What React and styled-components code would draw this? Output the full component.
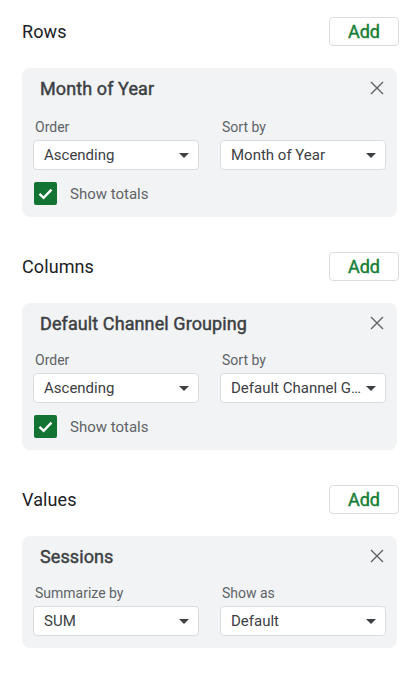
import React from 'react';
import styled, { createGlobalStyle } from 'styled-components';

const GlobalStyle = createGlobalStyle`
    body {
        margin: 0;
        background: #ffffff;
        font-family: Roboto, 'Noto Sans', Arial, sans-serif;
    }
`;

const Panel = styled.div`
    padding: 17px 18px 20px 22px;
    display: flex;
    flex-direction: column;
    gap: 35px;
`;

const Section = styled.section`
    display: flex;
    flex-direction: column;
    gap: 22px;
`;

const SectionHeader = styled.div`
    display: flex;
    align-items: center;
    justify-content: space-between;

    h2 {
        margin: 0;
        font-size: 18px;
        font-weight: 400;
        color: #202124;
        letter-spacing: 0.1px;
    }
`;

// medium weight: regular face with a thin stroke, since Roboto 500 renders as bold here
const AddButton = styled.button`
    width: 70px;
    height: 29px;
    background: #fff;
    border: 1px solid #dadce0;
    border-radius: 4px;
    color: #188038;
    font-family: inherit;
    font-size: 18px;
    font-weight: 400;
    -webkit-text-stroke: 0.45px #188038;
    padding: 0;
    cursor: pointer;
`;

const Card = styled.div`
    width: 375px;
    box-sizing: border-box;
    background: #f1f3f4;
    border-radius: 8px;
    padding: 10px 11px 12px 11px;
`;

const CardTitle = styled.div`
    display: flex;
    align-items: center;
    justify-content: space-between;
    height: 20px;
    padding-left: 7px;
    margin-bottom: ${p => p.gap}px;

    span {
        font-size: 18px;
        font-weight: 400;
        color: #3c4043;
        -webkit-text-stroke: 0.45px #3c4043;
        letter-spacing: 0.1px;
    }
`;

const CloseButton = styled.button`
    background: none;
    border: none;
    padding: 0;
    width: 14px;
    height: 14px;
    margin-right: 2px;
    display: flex;
    cursor: pointer;
`;

const Fields = styled.div`
    display: grid;
    grid-template-columns: 166px 166px;
    column-gap: 21px;
`;

const Field = styled.div`
    display: flex;
    flex-direction: column;
    gap: 5px;

    label {
        font-size: 14px;
        line-height: 16px;
        color: #5f6368;
        padding-left: 2px;
    }
`;

const Select = styled.div`
    height: 30px;
    box-sizing: border-box;
    background: #fff;
    border: 1px solid #dadce0;
    border-radius: 4px;
    display: flex;
    align-items: center;
    padding: 0 9px 0 10px;
    gap: 4px;
    font-size: 15px;
    color: #3c4043;

    span {
        flex: 1;
        white-space: nowrap;
        overflow: hidden;
        text-overflow: ellipsis;
    }
`;

const Caret = styled.i`
    width: 0;
    height: 0;
    border-left: 5px solid transparent;
    border-right: 5px solid transparent;
    border-top: 5px solid #3c4043;
    flex-shrink: 0;
`;

const CheckRow = styled.div`
    display: flex;
    align-items: center;
    gap: 13px;
    margin-top: 12px;
    padding-left: 1px;

    span {
        font-size: 15px;
        color: #5f6368;
    }
`;

const CheckBox = styled.div`
    width: 23px;
    height: 23px;
    border-radius: 2px;
    background: #137333;
    display: flex;
    align-items: center;
    justify-content: center;
`;

const XIcon = () => (
    <svg width="14" height="14" viewBox="0 0 14 14">
        <path d="M1 1L13 13M13 1L1 13" stroke="#5f6368" strokeWidth="1.4" fill="none" />
    </svg>
);

const CheckIcon = () => (
    <svg width="17" height="17" viewBox="0 0 17 17">
        <path d="M2.5 8.8L6.6 12.8L14.5 4.6" stroke="#fff" strokeWidth="2.4" fill="none" />
    </svg>
);

const sections = [
    {
        name: 'Rows',
        title: 'Month of Year',
        gap: 21,
        fields: [
            { label: 'Order', value: 'Ascending' },
            { label: 'Sort by', value: 'Month of Year' }
        ],
        totals: true
    },
    {
        name: 'Columns',
        title: 'Default Channel Grouping',
        gap: 19,
        fields: [
            { label: 'Order', value: 'Ascending' },
            { label: 'Sort by', value: 'Default Channel Grouping' }
        ],
        totals: true
    },
    {
        name: 'Values',
        title: 'Sessions',
        gap: 19,
        fields: [
            { label: 'Summarize by', value: 'SUM' },
            { label: 'Show as', value: 'Default' }
        ],
        totals: false
    }
];

export default function App() {
    return (
        <>
            <GlobalStyle />
            <Panel>
                {sections.map(s => (
                    <Section key={s.name}>
                        <SectionHeader>
                            <h2>{s.name}</h2>
                            <AddButton>Add</AddButton>
                        </SectionHeader>
                        <Card>
                            <CardTitle gap={s.gap}>
                                <span>{s.title}</span>
                                <CloseButton><XIcon /></CloseButton>
                            </CardTitle>
                            <Fields>
                                {s.fields.map(f => (
                                    <Field key={f.label}>
                                        <label>{f.label}</label>
                                        <Select>
                                            <span>{f.value}</span>
                                            <Caret />
                                        </Select>
                                    </Field>
                                ))}
                            </Fields>
                            {s.totals && (
                                <CheckRow>
                                    <CheckBox><CheckIcon /></CheckBox>
                                    <span>Show totals</span>
                                </CheckRow>
                            )}
                        </Card>
                    </Section>
                ))}
            </Panel>
        </>
    );
}
